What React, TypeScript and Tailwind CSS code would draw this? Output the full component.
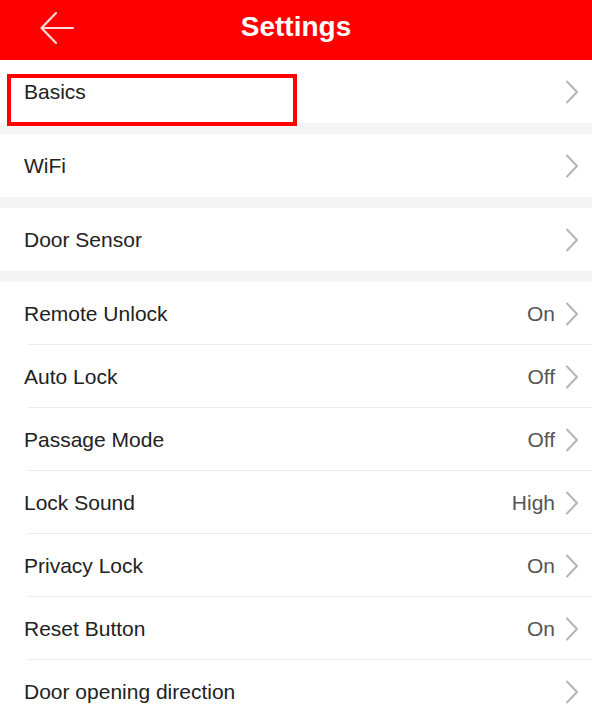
import React from "react";

type Row = { label: string; value?: string };

const groups: Row[][] = [
  [{ label: "Basics" }],
  [{ label: "WiFi" }],
  [{ label: "Door Sensor" }],
  [
    { label: "Remote Unlock", value: "On" },
    { label: "Auto Lock", value: "Off" },
    { label: "Passage Mode", value: "Off" },
    { label: "Lock Sound", value: "High" },
    { label: "Privacy Lock", value: "On" },
    { label: "Reset Button", value: "On" },
    { label: "Door opening direction" },
  ],
];

function Chevron() {
  return (
    <svg width="14" height="24" viewBox="0 0 14 24" fill="none" className="shrink-0">
      <path d="M2 1.5 L12 12 L2 22.5" stroke="#b5b5b5" strokeWidth="2" strokeLinecap="round" strokeLinejoin="round" />
    </svg>
  );
}

function SettingRow({ row, divider, highlight }: { row: Row; divider: boolean; highlight?: boolean }) {
  return (
    <div className="relative bg-white">
      <div className="flex h-[63px] items-center justify-between pl-6 pr-[13px]">
        <span className="text-[21px] text-[#222]">{row.label}</span>
        <div className="flex items-center gap-[10px]">
          {row.value && <span className="text-[21px] text-[#555]">{row.value}</span>}
          <Chevron />
        </div>
      </div>
      {divider && <div className="absolute bottom-0 left-7 right-0 h-px bg-[#ececec]" />}
      {/* annotation box over the first row */}
      {highlight && (
        <div className="pointer-events-none absolute left-[7px] top-[14px] h-[52px] w-[290px] border-4 border-[#ff0000]" />
      )}
    </div>
  );
}

export default function App() {
  return (
    <div
      className="h-[722px] w-[592px] overflow-hidden bg-[#f4f4f4]"
      style={{ fontFamily: '"Liberation Sans", Arial, sans-serif' }}
    >
      <header className="relative flex h-[60px] items-center justify-center bg-[#ff0000] pb-[6px]">
        <svg
          width="36"
          height="34"
          viewBox="0 0 36 34"
          fill="none"
          className="absolute left-[39px] top-[11px]"
        >
          <path d="M34 17 H3 M17 2 L2.5 17 L17 32" stroke="#ffffff" strokeOpacity="0.85" strokeWidth="2.2" strokeLinecap="round" strokeLinejoin="round" />
        </svg>
        <h1 className="text-[28px] font-bold text-white">Settings</h1>
      </header>
      <div className="flex flex-col gap-[11px]">
        {groups.map((g, gi) => (
          <div key={gi} className="flex flex-col">
            {g.map((row, i) => (
              <SettingRow
                key={row.label}
                row={row}
                divider={i < g.length - 1}
                highlight={gi === 0 && i === 0}
              />
            ))}
          </div>
        ))}
      </div>
    </div>
  );
}
